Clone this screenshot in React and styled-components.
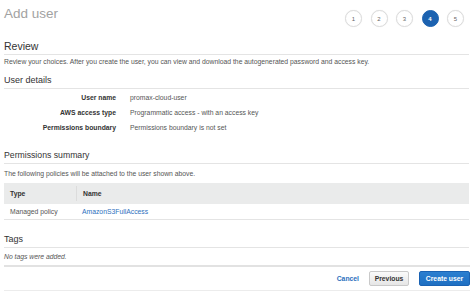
import React from 'react'
import styled, { createGlobalStyle } from 'styled-components'

const GlobalStyle = createGlobalStyle`
    body {
        margin: 0;
        background: #ffffff;
        font-family: "Liberation Sans", Arial, sans-serif;
        color: #444;
    }
`
const Page = styled.div`
    width: 474px;
    height: 292px;
    padding: 0 4px 0 4px;
    box-sizing: border-box;
    overflow: hidden;
`
const Header = styled.div`
    height: 34px;
    display: flex;
    justify-content: space-between;
    align-items: flex-start;
`
const Title = styled.h1`
    margin: 4px 0 0 0;
    font-size: 13.5px;
    line-height: 20px;
    font-weight: 400;
    color: #a2a2a2;
`
const Steps = styled.div`
    display: flex;
    gap: 8.5px;
    margin-top: 10px;
    margin-right: 6px;
`
const Step = styled.div`
    width: 17px;
    height: 17px;
    border-radius: 50%;
    box-sizing: border-box;
    display: flex;
    align-items: center;
    justify-content: center;
    font-size: 6px;
    border: 1px solid ${p => (p.$active ? '#1c62b0' : '#dcdcdc')};
    box-shadow: ${p => (p.$active ? 'none' : '0 0 1px #e6e6e6')};
    background: ${p => (p.$active ? '#1c62b0' : '#ffffff')};
    color: ${p => (p.$active ? '#ffffff' : '#666')};
    font-weight: ${p => (p.$active ? 700 : 400)};
`
const SectionTitle = styled.h2`
    margin: ${p => p.$top}px 1px 0 0;
    padding-bottom: 2px;
    font-size: ${p => p.$size || 10}px;
    line-height: 12px;
    font-weight: 400;
    color: #333;
    border-bottom: 1px solid #e4e4e4;
`
const Text = styled.p`
    margin: ${p => p.$top}px 0 0 0;
    font-size: 6.8px;
    line-height: 10px;
    color: #555;
    font-style: ${p => (p.$italic ? 'italic' : 'normal')};
`
const Details = styled.div`
    display: grid;
    grid-template-columns: 112px 1fr;
    column-gap: 14px;
    row-gap: 5px;
    margin-top: 4px;
    font-size: 6.8px;
    line-height: 10px;
`
const Label = styled.div`
    text-align: right;
    font-weight: 700;
    color: #333;
`
const Value = styled.div`
    color: #555;
`
const Table = styled.div`
    margin: 4px 1px 0 0;
    font-size: 6.8px;
`
const HeadRow = styled.div`
    display: grid;
    grid-template-columns: 72px 1fr;
    height: 21px;
    background: #eaebeb;
    font-weight: 700;
    color: #333;
`
const BodyRow = styled.div`
    display: grid;
    grid-template-columns: 72px 1fr;
    height: 15px;
    border-bottom: 1px solid #e4e4e4;
    color: #555;
`
const Cell = styled.div`
    display: flex;
    align-items: center;
    padding-left: 6px;
    border-left: ${p => (p.$divided ? '1px solid #dcdcdc' : 'none')};
    margin: ${p => (p.$divided ? '3px 0' : '0')};
`
const Link = styled.a`
    color: #2c6fbd;
    text-decoration: none;
`
const Footer = styled.div`
    margin-top: 3px;
    border-top: 2px solid #e2e2e2;
    border-bottom: 1px solid #ececec;
    height: 19px;
    display: flex;
    justify-content: flex-end;
    align-items: flex-start;
    gap: 10px;
    padding-top: 4px;
`
const CancelLink = styled.a`
    font-size: 6.8px;
    font-weight: 700;
    color: #2c6fbd;
    line-height: 15px;
    text-decoration: none;
`
const Button = styled.button`
    height: 15px;
    padding: 0;
    width: ${p => p.$w}px;
    box-sizing: border-box;
    font-family: "Liberation Sans", Arial, sans-serif;
    font-size: 6.8px;
    font-weight: 700;
    border-radius: 2px;
    border: 1px solid ${p => (p.$primary ? '#1a62b3' : '#c9c9c9')};
    background: ${p => (p.$primary ? 'linear-gradient(#2c7fd0, #1e6fc2)' : 'linear-gradient(#fafafa, #e6e6e6)')};
    color: ${p => (p.$primary ? '#ffffff' : '#333')};
`

const App = () => {
    return (
        <Page>
            <GlobalStyle />
            <Header>
                <Title>Add user</Title>
                <Steps>
                    {[1, 2, 3, 4, 5].map(n => (
                        <Step key={n} $active={n === 4}>{n}</Step>
                    ))}
                </Steps>
            </Header>
            <SectionTitle $top={6} $size={10.5}>Review</SectionTitle>
            <Text $top={2}>Review your choices. After you create the user, you can view and download the autogenerated password and access key.</Text>
            <SectionTitle $top={7} $size={9}>User details</SectionTitle>
            <Details>
                <Label>User name</Label>
                <Value>promax-cloud-user</Value>
                <Label>AWS access type</Label>
                <Value>Programmatic access - with an access key</Value>
                <Label>Permissions boundary</Label>
                <Value>Permissions boundary is not set</Value>
            </Details>
            <SectionTitle $top={16} $size={8.7}>Permissions summary</SectionTitle>
            <Text $top={5}>The following policies will be attached to the user shown above.</Text>
            <Table>
                <HeadRow>
                    <Cell>Type</Cell>
                    <Cell $divided>Name</Cell>
                </HeadRow>
                <BodyRow>
                    <Cell>Managed policy</Cell>
                    <Cell><Link href="#">AmazonS3FullAccess</Link></Cell>
                </BodyRow>
            </Table>
            <SectionTitle $top={13} $size={9}>Tags</SectionTitle>
            <Text $top={4} $italic>No tags were added.</Text>
            <Footer>
                <CancelLink href="#">Cancel</CancelLink>
                <Button $w={40}>Previous</Button>
                <Button $primary $w={51}>Create user</Button>
            </Footer>
        </Page>
    )
}

export default App
